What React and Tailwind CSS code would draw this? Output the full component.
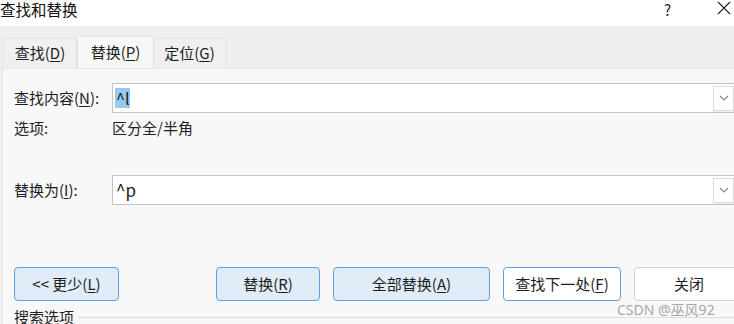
import React from "react";

const font = { fontFamily: '"Noto Sans CJK SC", "Microsoft YaHei", "Noto Sans", sans-serif' };

function U({ children }) {
  return <span className="underline underline-offset-2 decoration-1">{children}</span>;
}

function Chevron() {
  return (
    <svg width="10" height="6" viewBox="0 0 10 6" fill="none">
      <path d="M1 1 L5 5 L9 1" stroke="#8a8a8a" strokeWidth="1.2" />
    </svg>
  );
}

function Combo({ children }) {
  return (
    <div className="flex-1 h-[30px] bg-white border border-[#c4c4c4] border-r-0 flex items-center pl-[1px] relative">
      <div className="flex-1 flex items-center">{children}</div>
      <div className="w-[21px] h-[25px] mr-0 border border-[#dcdcdc] bg-white flex items-center justify-center shadow-[0_1px_1px_rgba(0,0,0,0.06)]">
        <Chevron />
      </div>
    </div>
  );
}

function Btn({ w, variant, children, ml }) {
  const cls =
    variant === "blue"
      ? "bg-[#e0ecf8] border-[#5b9fe5]"
      : variant === "outline"
      ? "bg-white border-[#5b9fe5]"
      : "bg-white border-[#d4d4d4]";
  return (
    <div
      className={`h-[34px] shrink-0 border rounded-[4px] flex items-center justify-center text-[15px] text-[#1e1e1e] ${cls}`}
      style={{ width: w, marginLeft: ml }}
    >
      {children}
    </div>
  );
}

export default function App() {
  return (
    <div className="w-[734px] h-[324px] overflow-hidden bg-[#efefef] relative" style={font}>
      {/* title bar */}
      <div className="h-[26px] bg-white flex items-start relative">
        <div className="text-[15.5px] leading-[18px] text-[#111] mt-[0px]">查找和替换</div>
        <div className="absolute left-[664px] top-[-1px] text-[15px] text-[#222]">?</div>
        <svg className="absolute left-[717px] top-[1px]" width="14" height="14" viewBox="0 0 14 14">
          <path d="M1 1 L13 13 M13 1 L1 13" stroke="#222" strokeWidth="1.1" />
        </svg>
      </div>
      {/* tabs */}
      <div className="h-[42px] flex items-end pl-[3px]">
        <div className="w-[74px] h-[30px] bg-[#f0f0f0] border border-[#e3e3e3] border-b-0 flex items-center justify-center text-[15px] text-[#1e1e1e]">
          查找(<U>D</U>)
        </div>
        <div className="w-[77px] h-[32px] bg-[#f8f8f8] border border-[#e3e3e3] border-b-0 flex items-center justify-center text-[15px] text-[#1e1e1e]">
          替换(<U>P</U>)
        </div>
        <div className="w-[72px] h-[30px] bg-[#f0f0f0] border border-[#e3e3e3] border-b-0 border-l-0 flex items-center justify-center text-[15px] text-[#1e1e1e]">
          定位(<U>G</U>)
        </div>
      </div>
      {/* panel */}
      <div className="ml-[2px] h-[256px] bg-[#f8f8f8] border-l border-t border-[#e6e6e6] pl-[11px] pt-[14px] text-[15px] text-[#1e1e1e] flex flex-col">
        <div className="flex items-center">
          <div className="w-[98px]">查找内容(<U>N</U>):</div>
          <Combo>
            <span className="ml-[1px] bg-[#99c9ef] h-[20px] leading-[20px] px-[1px] text-[16px] text-[#1a1a1a]">^l</span>
          </Combo>
        </div>
        <div className="flex items-center h-[20px] mt-[5px]">
          <div className="w-[98px]">选项:</div>
          <div>区分全/半角</div>
        </div>
        <div className="flex items-center mt-[37px]">
          <div className="w-[98px]">替换为(<U>I</U>):</div>
          <Combo>
            <span className="ml-[2px] text-[17px] text-[#1a1a1a]">^p</span>
          </Combo>
        </div>
        <div className="flex items-center mt-[62px]">
          <Btn w={105} variant="blue">&lt;&lt; 更少(<U>L</U>)</Btn>
          <Btn w={104} variant="blue" ml={97}>替换(<U>R</U>)</Btn>
          <Btn w={157} variant="blue" ml={13}>全部替换(<U>A</U>)</Btn>
          <Btn w={118} variant="outline" ml={13}>查找下一处(<U>F</U>)</Btn>
          <Btn w={110} variant="plain" ml={13}>关闭</Btn>
        </div>
        <div className="flex items-center mt-[7px] h-[18px]">
          <span className="text-[15px]">搜索选项</span>
          <div className="flex-1 h-px bg-[#dcdcdc] ml-[4px]" />
        </div>
      </div>
      <div className="absolute left-[617px] top-[299px] text-[14px] text-[#a8a8a8]" style={{ fontFamily: '"Noto Sans", "Noto Sans CJK SC", sans-serif' }}>
        CSDN @巫风92
      </div>
    </div>
  );
}
